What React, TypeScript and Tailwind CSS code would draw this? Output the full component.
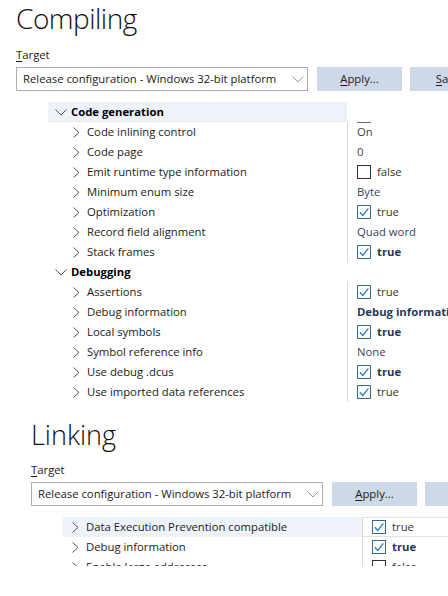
import React from "react";

type Value =
  | { kind: "text"; text: string; bold?: boolean }
  | { kind: "check"; checked: boolean; bold?: boolean };

interface Row {
  label: string;
  value?: Value;
  header?: boolean;
  level: number;
}

const compilingRows: Row[] = [
  { label: "Code generation", header: true, level: 0 },
  { label: "Code inlining control", level: 1, value: { kind: "text", text: "On" } },
  { label: "Code page", level: 1, value: { kind: "text", text: "0" } },
  { label: "Emit runtime type information", level: 1, value: { kind: "check", checked: false } },
  { label: "Minimum enum size", level: 1, value: { kind: "text", text: "Byte" } },
  { label: "Optimization", level: 1, value: { kind: "check", checked: true } },
  { label: "Record field alignment", level: 1, value: { kind: "text", text: "Quad word" } },
  { label: "Stack frames", level: 1, value: { kind: "check", checked: true, bold: true } },
  { label: "Debugging", header: true, level: 0 },
  { label: "Assertions", level: 1, value: { kind: "check", checked: true } },
  { label: "Debug information", level: 1, value: { kind: "text", text: "Debug information", bold: true } },
  { label: "Local symbols", level: 1, value: { kind: "check", checked: true, bold: true } },
  { label: "Symbol reference info", level: 1, value: { kind: "text", text: "None" } },
  { label: "Use debug .dcus", level: 1, value: { kind: "check", checked: true, bold: true } },
  { label: "Use imported data references", level: 1, value: { kind: "check", checked: true } },
];

const linkingRows: Row[] = [
  { label: "Data Execution Prevention compatible", level: 0, value: { kind: "check", checked: true } },
  { label: "Debug information", level: 0, value: { kind: "check", checked: true, bold: true } },
  { label: "Enable large addresses", level: 0, value: { kind: "check", checked: false } },
];

const ChevronDown = ({ color = "#555" }: { color?: string }) => (
  <svg width="12" height="7" viewBox="0 0 12 7" className="shrink-0">
    <path d="M0.5 0.5 L6 6 L11.5 0.5" stroke={color} strokeWidth="1" fill="none" />
  </svg>
);

const ChevronRight = () => (
  <svg width="7" height="11" viewBox="0 0 7 11" className="shrink-0">
    <path d="M0.5 0.5 L6 5.5 L0.5 10.5" stroke="#555" strokeWidth="1" fill="none" />
  </svg>
);

const CheckBox = ({ checked }: { checked: boolean }) => (
  <svg width="14" height="14" viewBox="0 0 14 14" className="shrink-0">
    <rect x="0.5" y="0.5" width="13" height="13" fill="#fff" stroke={checked ? "#3a6a80" : "#333"} />
    {checked && (
      <path d="M2.8 7.2 L5.8 10.4 L11.4 3.4" stroke="#2b7db5" strokeWidth="1.3" fill="none" />
    )}
  </svg>
);

const ValueCell = ({ value, focused, marker }: { value: Value; focused?: boolean; marker?: boolean }) => {
  const textClass = value.bold
    ? "font-bold text-[#1f3b5c]"
    : value.kind === "text"
    ? "text-[#34465a]"
    : "text-[#333]";
  return (
    <div
      className={`relative flex h-[20px] flex-1 items-center gap-[6px] whitespace-nowrap border-l border-[#d9d9d9] pl-[9px] ${
        focused ? "shadow-[inset_0_1px_0_#e3e3e3,inset_0_-1px_0_#e3e3e3]" : ""
      }`}
    >
      {marker && <div className="absolute left-[9px] top-0 h-px w-[14px] bg-[#666]" />}
      {value.kind === "check" && <CheckBox checked={value.checked} />}
      <span className={textClass}>{value.kind === "check" ? (value.checked ? "true" : "false") : value.text}</span>
    </div>
  );
};

const Tree = ({ rows, highlight, clip }: { rows: Row[]; highlight: number; clip?: boolean }) => (
  <div className={`ml-[32px] mt-[11px] flex flex-col text-[11.3px] text-[#1a1a1a] ${clip ? "h-[49px] overflow-hidden" : ""}`}>
    {rows.map((row, i) => (
      <div key={i} className="flex h-[20px] items-center">
        <div
          className={`flex h-[20px] w-[299px] shrink-0 items-center ${
            i === highlight ? "bg-[#eef3f9]" : ""
          } ${i === highlight && row.header ? "shadow-[inset_0_-1px_0_#e8e8e8]" : ""}`}
          style={{ paddingLeft: 7 + row.level * 16 }}
        >
          <div className="flex w-[16px] shrink-0 items-center">
            {row.header ? <ChevronDown /> : <div className="ml-[2px] flex"><ChevronRight /></div>}
          </div>
          <span className={`whitespace-nowrap ${row.header ? "font-bold text-black" : ""}`}>{row.label}</span>
        </div>
        {row.value && (
          <ValueCell value={row.value} focused={clip && i === 0} marker={!clip && i === 1} />
        )}
      </div>
    ))}
  </div>
);

const TargetBar = ({ labelClass }: { labelClass: string }) => (
  <>
    <div className={`h-[16px] text-[11.3px] leading-[16px] text-[#1a1a1a] ${labelClass}`}>
      <span className="underline underline-offset-2">T</span>arget
    </div>
    <div className="mt-[4px] flex h-[24px] items-stretch gap-[9px] text-[11.3px]">
      <div className="flex w-[292px] shrink-0 items-center justify-between border border-[#adadad] bg-white pl-[6px] pr-[3px] text-[#1a1a1a]">
        <span className="whitespace-nowrap">Release configuration - Windows 32-bit platform</span>
        <ChevronDown color="#999" />
      </div>
      <div className="flex w-[85px] shrink-0 items-center justify-center bg-[#cdd9e6] text-[#1a1a1a]">
        <span>
          <span className="underline underline-offset-2">A</span>pply...
        </span>
      </div>
      <div className="ml-[-1px] flex w-[85px] shrink-0 items-center justify-center bg-[#cdd9e6] text-[#1a1a1a]">
        <span>
          <span className="underline underline-offset-2">S</span>ave...
        </span>
      </div>
    </div>
  </>
);

export default function App() {
  return (
    <div
      className="h-[596px] w-[448px] overflow-hidden bg-white"
      style={{ fontFamily: '"Open Sans", "Noto Sans", sans-serif' }}
    >
      <section className="pl-[16px]">
        <h1 className="h-[36px] whitespace-nowrap text-[28px] font-light leading-[36px] tracking-[-0.5px] text-[#111]">Compiling</h1>
        <TargetBar labelClass="mt-[11px]" />
        <Tree rows={compilingRows} highlight={0} />
      </section>
      <section className="pl-[31px]">
        <h1 className="mt-[14px] h-[38px] whitespace-nowrap text-[27px] font-light leading-[38px] text-[#111]">Linking</h1>
        <TargetBar labelClass="mt-[8px]" />
        <Tree rows={linkingRows} highlight={0} clip />
      </section>
    </div>
  );
}
